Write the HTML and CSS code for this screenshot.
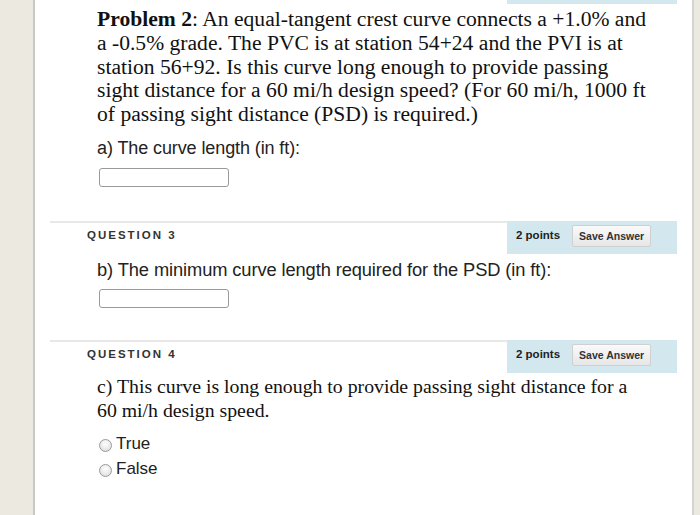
FILE: index.html
```html
<!DOCTYPE html>
<html>
<head>
<meta charset="utf-8">
<link rel="stylesheet" href="styles.css">
</head>
<body>
<div class="page">
  <div class="strip"></div>
  <div class="card">
    <div class="q-tail"></div>
    <div class="q-body first">
      <p class="serif problem"><b>Problem 2</b>: An equal-tangent crest curve connects a +1.0% and<br>a -0.5% grade. The PVC is at station 54+24 and the PVI is at<br>station 56+92. Is this curve long enough to provide passing<br>sight distance for a 60 mi/h design speed? (For 60 mi/h, 1000 ft<br>of passing sight distance (PSD) is required.)</p>
      <p class="sans label">a) The curve length (in ft):</p>
      <div class="input"></div>
    </div>
    <div class="q-head">
      <div class="q-title">QUESTION 3</div>
      <div class="q-points">
        <span class="pts">2 points</span>
        <span class="save">Save Answer</span>
      </div>
    </div>
    <div class="q-body">
      <p class="sans label b">b) The minimum curve length required for the PSD (in ft):</p>
      <div class="input second"></div>
    </div>
    <div class="q-head q4">
      <div class="q-title">QUESTION 4</div>
      <div class="q-points">
        <span class="pts">2 points</span>
        <span class="save">Save Answer</span>
      </div>
    </div>
    <div class="q-body">
      <p class="serif c">c) This curve is long enough to provide passing sight distance for a<br>60 mi/h design speed.</p>
      <div class="opts">
        <div class="opt"><span class="radio"></span><span class="sans">True</span></div>
        <div class="opt"><span class="radio"></span><span class="sans">False</span></div>
      </div>
    </div>
  </div>
  <div class="strip-r"></div>
</div>
</body>
</html>
```

FILE: styles.css
```css
html, body {
  margin: 0;
  padding: 0;
  background: #ece9e1;
  width: 700px;
  height: 515px;
  overflow: hidden;
}
.page {
  display: flex;
  height: 515px;
}
.strip {
  width: 33px;
  flex: none;
}
.strip-r {
  flex: 1;
}
.card {
  flex: none;
  width: 661px;
  background: #fff;
  border-left: 2px solid #cbc9c6;
  border-right: 2px solid #d6d4d0;
  box-sizing: border-box;
}
.q-tail {
  height: 4px;
  width: 170px;
  margin-left: auto;
  margin-right: 15px;
  background: #d3e8ee;
}
.serif {
  font-family: "Liberation Serif", "Times New Roman", serif;
  color: #111;
}
.sans {
  font-family: "Liberation Sans", Arial, sans-serif;
  color: #222;
}
p { margin: 0; }
.q-body {
  padding-left: 62px;
  padding-right: 10px;
}
.problem {
  font-size: 21.6px;
  line-height: 23.75px;
  margin-top: 4px;
  white-space: nowrap;
}
.label {
  font-size: 18px;
  line-height: 20px;
  margin-top: 11px;
  letter-spacing: -0.1px;
}
.label.b {
  font-size: 18.3px;
  margin-top: 6px;
}
.input {
  width: 128px;
  height: 17px;
  border: 1.5px solid #9a9a9a;
  border-radius: 3px;
  margin: 10px 0 0 2px;
}
.input.second {
  margin-top: 9px;
}
.q-head {
  display: flex;
  justify-content: space-between;
  margin: 34px 15px 0 15px;
  height: 33px;
  border-top: 2px solid #e8e8e8;
  box-sizing: border-box;
}
.q-head.q4 {
  margin-top: 32px;
}
.q-title {
  font-family: "Liberation Sans", Arial, sans-serif;
  font-weight: bold;
  font-size: 11.5px;
  letter-spacing: 2px;
  color: #333;
  padding-left: 37px;
  padding-top: 6px;
}
.q-points {
  width: 170px;
  background: #d3e8ee;
  margin-top: -2px;
  display: flex;
  align-items: center;
  box-sizing: border-box;
  padding-left: 9px;
}
.pts {
  font-family: "Liberation Sans", Arial, sans-serif;
  font-weight: bold;
  font-size: 11.5px;
  color: #222;
  margin-right: 12px;
  margin-top: -4px;
}
.save {
  font-family: "Liberation Sans", Arial, sans-serif;
  font-weight: bold;
  font-size: 10.5px;
  color: #333;
  background: linear-gradient(#fafafa, #e6e6e6);
  border: 1px solid #d0d0d0;
  border-radius: 2px;
  padding: 4px 6px;
  margin-top: -2px;
}
.c {
  font-size: 19.8px;
  line-height: 24px;
  margin-top: 1px;
  white-space: nowrap;
}
.opts {
  margin-top: 10px;
}
.opt {
  display: flex;
  align-items: center;
  height: 25px;
  font-size: 17px;
}
.radio {
  width: 11px;
  height: 11px;
  border-radius: 50%;
  border: 1px solid #9a9a9a;
  background: radial-gradient(circle at 50% 35%, #fff, #d8d8d8);
  margin: 3px 4px 0 2px;
}
```
